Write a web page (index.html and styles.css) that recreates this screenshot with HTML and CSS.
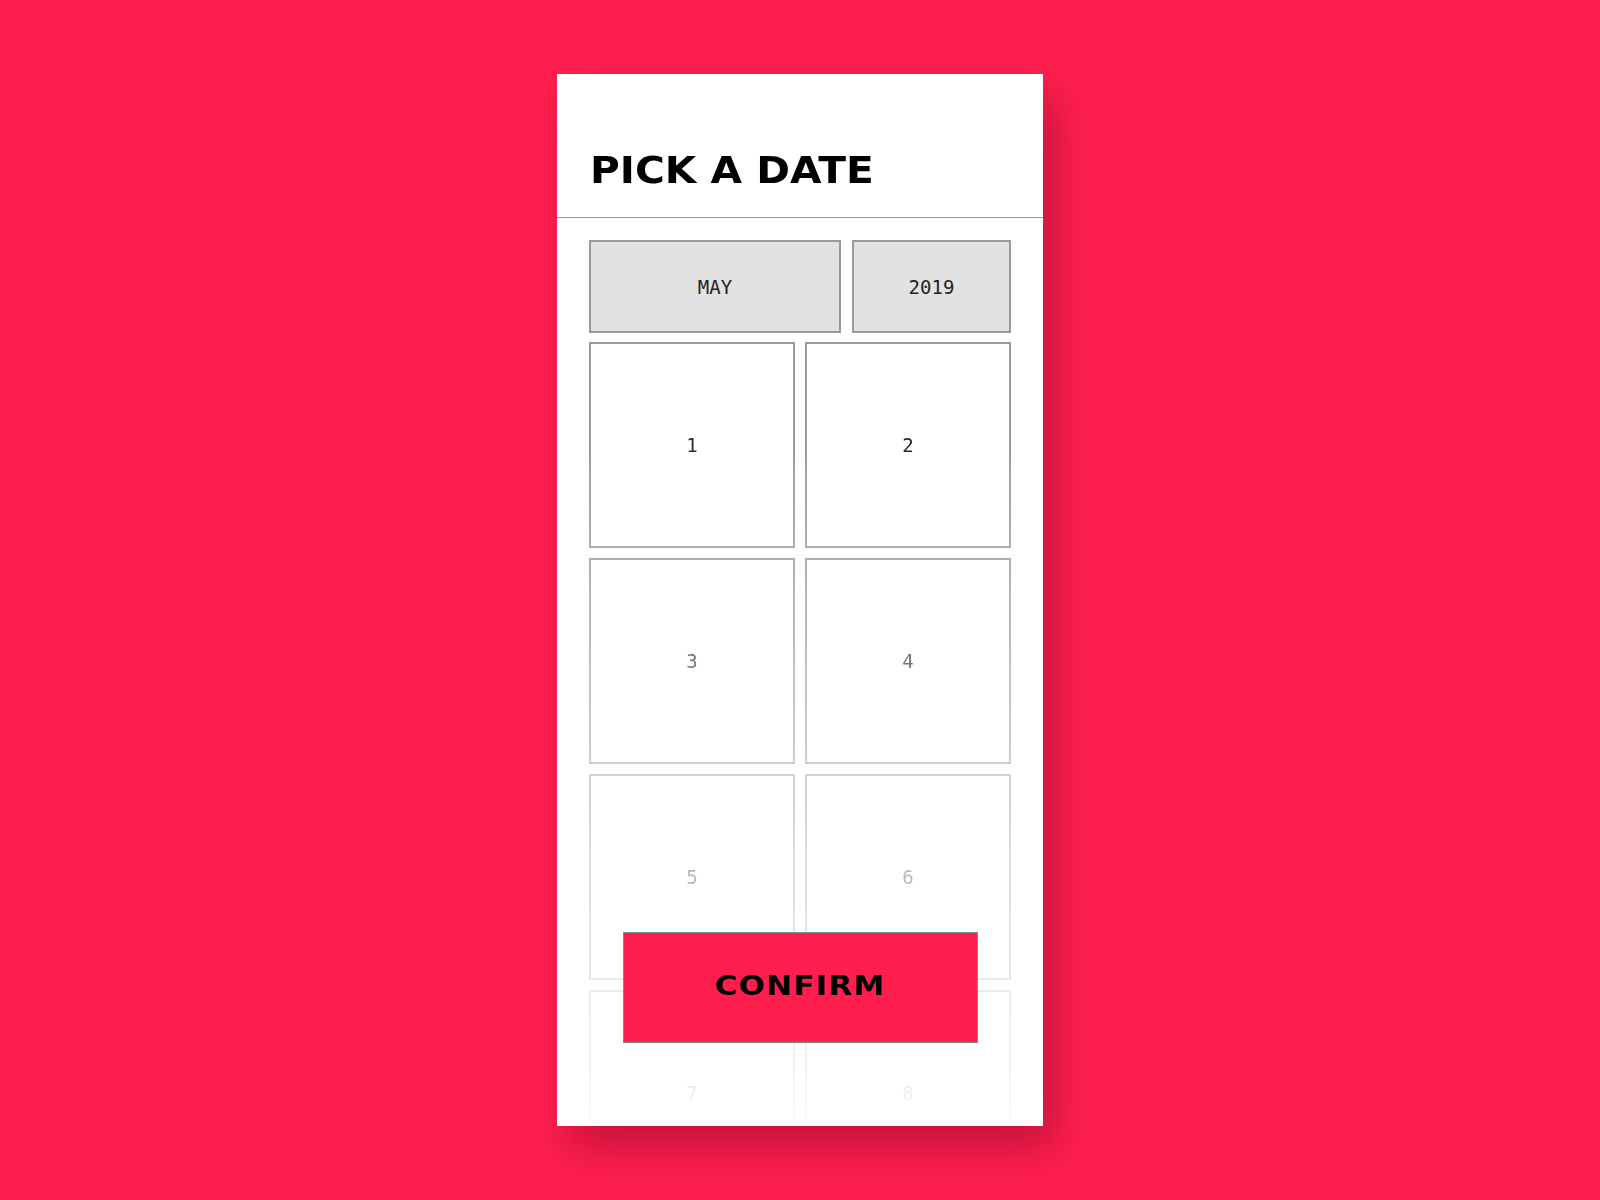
FILE: index.html
```html
<!DOCTYPE html>
<html lang="en">
<head>
    <meta charset="UTF-8">
    <meta name="viewport" content="width=device-width, initial-scale=1.0">
    <title>Pick a Date</title>
    <link rel="stylesheet" href="styles.css">
</head>
<body>

    <div class="picker">
        <div class="picker-head">
            <h1>PICK A DATE</h1>
        </div>

        <div class="picker-body">
            <div class="selects">
                <div class="select">MAY</div>
                <div class="select">2019</div>
            </div>

            <div class="days">
                <div class="day">1</div>
                <div class="day">2</div>
                <div class="day">3</div>
                <div class="day">4</div>
                <div class="day">5</div>
                <div class="day">6</div>
                <div class="day">7</div>
                <div class="day">8</div>
            </div>
        </div>

        <button class="confirm"><span>CONFIRM</span></button>
    </div>

</body>
</html>
```

FILE: styles.css
```css
html {
    background-color: #ff1f4f;
}
body {
    margin: 0;
    padding-top: 74px;
    min-height: 100vh;
    box-sizing: border-box;
    background-color: #ff1f4f;
    font-family: "DejaVu Sans", sans-serif;
}
.picker {
    position: relative;
    width: 486px;
    height: 1052px;
    margin: 0 auto;
    background: #fff;
    overflow: hidden;
    box-shadow: 12px 22px 40px rgba(110, 0, 30, 0.4);
}
.picker-head {
    height: 115px;
    padding: 0 33px 28px;
    display: flex;
    align-items: flex-end;
    border-bottom: 1px solid #999;
}
/* wide display look: stretch the bold face horizontally */
.picker-head h1 {
    margin: 0;
    font-size: 37px;
    line-height: 37px;
    font-weight: bold;
    color: #000;
    transform: scaleX(1.1);
    transform-origin: left bottom;
}
.picker-body {
    padding: 22px 32px 0;
}
.selects {
    display: grid;
    grid-template-columns: 252px 1fr;
    gap: 11px;
    margin-bottom: 9px;
}
.select {
    height: 93px;
    box-sizing: border-box;
    border: 2px solid #999;
    background: #e2e2e2;
    display: flex;
    align-items: center;
    justify-content: center;
    font-family: "DejaVu Sans Mono", monospace;
    font-size: 19px;
    color: #222;
}
.days {
    display: grid;
    grid-template-columns: 1fr 1fr;
    gap: 10px;
    height: 778px;
    overflow: hidden;
    /* rows fade out towards the bottom of the list */
    -webkit-mask-image: linear-gradient(to bottom, #000 80px, rgba(0, 0, 0, 0.62) 320px, rgba(0, 0, 0, 0.32) 535px, rgba(0, 0, 0, 0.05) 778px);
    mask-image: linear-gradient(to bottom, #000 80px, rgba(0, 0, 0, 0.62) 320px, rgba(0, 0, 0, 0.32) 535px, rgba(0, 0, 0, 0.05) 778px);
}
.day {
    height: 206px;
    box-sizing: border-box;
    border: 2px solid #999;
    display: flex;
    align-items: center;
    justify-content: center;
    font-family: "DejaVu Sans Mono", monospace;
    font-size: 19px;
    color: #222;
}
.confirm {
    position: absolute;
    left: 66px;
    bottom: 83px;
    width: 355px;
    height: 111px;
    padding: 0 0 5px;
    border: 1px solid #7f8c8c;
    background: #ff1f4f;
    font-family: "DejaVu Sans", sans-serif;
    font-size: 27px;
    font-weight: bold;
    letter-spacing: 1px;
    color: #000;
    cursor: pointer;
}
.confirm span {
    display: inline-block;
    transform: scaleX(1.15);
}
```
